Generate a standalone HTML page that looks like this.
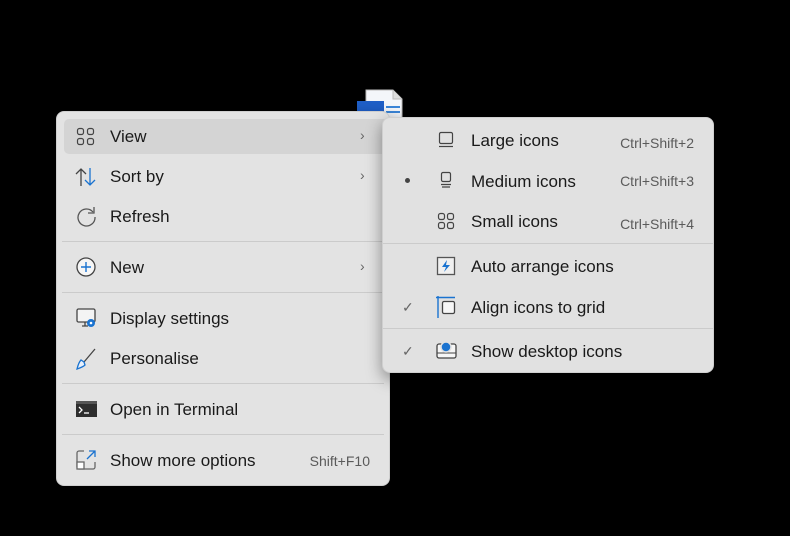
<!DOCTYPE html>
<html><head><style>
body{margin:0;width:790px;height:536px;background:#000;position:relative;overflow:hidden;font-family:"Liberation Sans",sans-serif;}
.menu{position:absolute;background:#e3e3e3;border-radius:8px;border:1px solid #cfcfcf;box-sizing:border-box;box-shadow:0 6px 16px rgba(0,0,0,.4);}
.t{position:absolute;font-size:17px;color:#1a1a1a;line-height:20px;white-space:nowrap;}
.s{position:absolute;font-size:14px;color:#5a5a5a;line-height:16px;white-space:nowrap;}
.sr{position:absolute;right:96px;font-size:14px;color:#5a5a5a;line-height:16px;white-space:nowrap;}
.sep{position:absolute;height:1px;background:#cbcbcb;}
.ic{position:absolute;}
.chev{position:absolute;font-size:14px;color:#666;}
</style></head><body>
<svg class="ic" style="left:356px;top:89px" width="50" height="30"><path d="M10 1h27l9 9v22H10z" fill="#f4f6fa" stroke="#bbb"/><path d="M37 1v9h9" fill="#ddd" stroke="#bbb"/><rect x="1" y="12" width="27" height="20" fill="#1f5fc8"/><rect x="30" y="17" width="14" height="2" fill="#3b86d9"/><rect x="30" y="22" width="14" height="2" fill="#3b86d9"/></svg>

<div class="menu" style="left:56px;top:111px;width:334px;height:375px;"></div>
<div style="position:absolute;left:64px;top:119px;width:326px;height:35px;background:#d4d4d4;border-radius:5px"></div>
<svg class="ic" style="left:76px;top:127px" width="20" height="20" fill="none" stroke="#444" stroke-width="1.2"><rect x="1.5" y="1.5" width="6" height="6" rx="2"/><rect x="11.5" y="1.5" width="6" height="6" rx="2"/><rect x="1.5" y="11.5" width="6" height="6" rx="2"/><rect x="11.5" y="11.5" width="6" height="6" rx="2"/></svg>
<div class="t" style="left:110px;top:127px">View</div><div class="chev" style="left:360px;top:127px">&#x203A;</div>
<svg class="ic" style="left:75px;top:167px" width="22" height="20" fill="none" stroke-width="1.3"><path d="M6 19V2M1 7l5-5 5 5" stroke="#444"/><path d="M15 1v17M10 13l5 5 5-5" stroke="#1a73d0"/></svg>
<div class="t" style="left:110px;top:167px">Sort by</div><div class="chev" style="left:360px;top:167px">&#x203A;</div>
<svg class="ic" style="left:76px;top:206px" width="21" height="21" fill="none" stroke="#555" stroke-width="1.3"><path d="M17 6A8.5 8.5 0 1 0 19 11"/><path d="M18 1v6h-6"/></svg>
<div class="t" style="left:110px;top:207px">Refresh</div>
<div class="sep" style="left:62px;top:241px;width:322px"></div>
<svg class="ic" style="left:76px;top:257px" width="21" height="21" fill="none"><circle cx="10" cy="10" r="9" stroke="#444" stroke-width="1.3" fill="#f6f6f6"/><path d="M10 5v10M5 10h10" stroke="#1a73d0" stroke-width="1.4"/></svg>
<div class="t" style="left:110px;top:258px">New</div><div class="chev" style="left:360px;top:258px">&#x203A;</div>
<div class="sep" style="left:62px;top:292px;width:322px"></div>
<svg class="ic" style="left:76px;top:308px" width="22" height="22" fill="none"><rect x="1" y="1" width="18" height="13" rx="1.5" stroke="#444" stroke-width="1.3" fill="#f4f4f4"/><path d="M6 18h6M9 14v4" stroke="#444" stroke-width="1.3"/><circle cx="15" cy="15" r="4" fill="#1a73d0"/><circle cx="15" cy="15" r="1.3" fill="#fff"/></svg>
<div class="t" style="left:110px;top:309px">Display settings</div>
<svg class="ic" style="left:76px;top:348px" width="22" height="22" fill="none"><path d="M19 1L8 14" stroke="#444" stroke-width="1.3"/><path d="M8 14l-3-2c-2 2-3 5-4 9 3-1 6-2 8-4z" stroke="#1a73d0" stroke-width="1.3" fill="#e8f0fb"/></svg>
<div class="t" style="left:110px;top:349px">Personalise</div>
<div class="sep" style="left:62px;top:383px;width:322px"></div>
<svg class="ic" style="left:76px;top:401px" width="22" height="18"><rect x="0" y="0" width="21" height="16" fill="#2e2e2e"/><rect x="0" y="0" width="21" height="3" fill="#555"/><path d="M3 6l3 3-3 3" stroke="#fff" fill="none" stroke-width="1.3"/><path d="M8 12h5" stroke="#fff" stroke-width="1.3"/></svg>
<div class="t" style="left:110px;top:400px">Open in Terminal</div>
<div class="sep" style="left:62px;top:434px;width:322px"></div>
<svg class="ic" style="left:76px;top:450px" width="22" height="22" fill="none" stroke-width="1.3"><path d="M8 1H3a2 2 0 0 0-2 2v14a2 2 0 0 0 2 2h14a2 2 0 0 0 2-2v-5" stroke="#666"/><rect x="1" y="12" width="7" height="7" fill="#fff" stroke="#666"/><path d="M11 9l8-8M13 1h6v6" stroke="#1a73d0"/></svg>
<div class="t" style="left:110px;top:451px">Show more options</div>
<div class="sr" style="right:420px;top:453px">Shift+F10</div>

<div class="menu" style="left:382px;top:117px;width:332px;height:256px;background:#e1e1e1"></div>
<svg class="ic" style="left:437px;top:131px" width="18" height="18" fill="none" stroke="#444" stroke-width="1.2"><rect x="2.5" y="1.5" width="13" height="11" rx="1.5"/><path d="M2 15.5h14"/></svg>
<div class="t" style="left:471px;top:131px">Large icons</div><div class="sr" style="top:135px">Ctrl+Shift+2</div>
<div style="position:absolute;left:405px;top:178px;width:5px;height:5px;border-radius:50%;background:#444"></div>
<svg class="ic" style="left:437px;top:171px" width="18" height="18" fill="none" stroke="#444" stroke-width="1.2"><rect x="4.5" y="1.5" width="9" height="9" rx="1.5"/><path d="M4 13.5h10M5 16h8"/></svg>
<div class="t" style="left:471px;top:172px">Medium icons</div><div class="sr" style="top:173px">Ctrl+Shift+3</div>
<svg class="ic" style="left:437px;top:212px" width="18" height="18" fill="none" stroke="#444" stroke-width="1.2"><rect x="1.5" y="1.5" width="6" height="6" rx="2"/><rect x="10.5" y="1.5" width="6" height="6" rx="2"/><rect x="1.5" y="10.5" width="6" height="6" rx="2"/><rect x="10.5" y="10.5" width="6" height="6" rx="2"/></svg>
<div class="t" style="left:471px;top:212px">Small icons</div><div class="sr" style="top:216px">Ctrl+Shift+4</div>
<div class="sep" style="left:383px;top:243px;width:330px"></div>
<svg class="ic" style="left:436px;top:256px" width="20" height="20" fill="none"><rect x="1.5" y="1.5" width="17" height="17" stroke="#555" stroke-width="1.3" fill="#f0f0f0"/><path d="M11 4L6 11h4l-2 5 6-7h-4z" fill="#1a73d0"/></svg>
<div class="t" style="left:471px;top:257px">Auto arrange icons</div>
<div class="s" style="left:402px;top:299px;color:#666">&#x2713;</div>
<svg class="ic" style="left:436px;top:296px" width="20" height="22" fill="none"><path d="M0 1.5h19M2 0v22" stroke="#1a73d0" stroke-width="1.4"/><rect x="6.5" y="5.5" width="12" height="12" rx="1.5" stroke="#444" stroke-width="1.3" fill="#f6f6f6"/></svg>
<div class="t" style="left:471px;top:298px">Align icons to grid</div>
<div class="sep" style="left:383px;top:328px;width:330px"></div>
<div class="s" style="left:402px;top:343px;color:#666">&#x2713;</div>
<svg class="ic" style="left:436px;top:340px" width="22" height="20" fill="none"><rect x="1" y="4" width="19" height="14" rx="2" stroke="#444" stroke-width="1.3" fill="#f6f6f6"/><path d="M1 13h19" stroke="#444"/><circle cx="10" cy="7" r="5" fill="#1a73d0" stroke="#e1e1e1" stroke-width="1.5"/></svg>
<div class="t" style="left:471px;top:342px">Show desktop icons</div>
</body></html>
